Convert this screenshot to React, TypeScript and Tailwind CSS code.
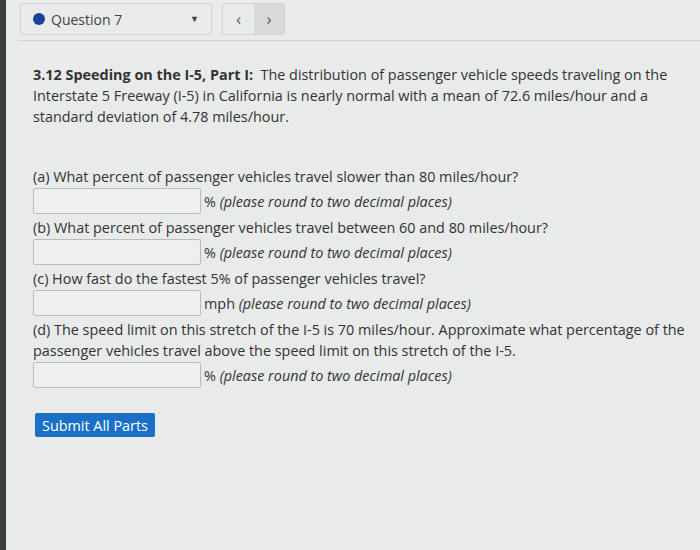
import React from 'react';

const Answer: React.FC<{ unit?: string }> = ({ unit = '%' }) => (
  <div className="flex items-center h-[26px] mt-[1px] mb-[3px]">
    <div className="w-[168px] h-[26px] border border-[#b8bdbb] rounded-[2px] bg-[#eef0ef]" />
    <span className="ml-[3px]">
      {unit} <i>(please round to two decimal places)</i>
    </span>
  </div>
);

export default function App() {
  return (
    <div
      className="w-[700px] h-[550px] flex bg-[#e8ebea] text-[#333] overflow-hidden"
      style={{ fontFamily: '"Open Sans", "Liberation Sans", sans-serif' }}
    >
      <div className="w-[6px] bg-[#3a3d3d]" />
      <div className="flex-1 flex flex-col">
        <div className="flex items-center ml-[12px] pl-[2px] pt-[3px] pb-[5px] border-b border-[#cfd3d1]">
          <div className="w-[192px] h-[32px] border border-[#d0d4d2] rounded-[3px] flex items-center px-[12px]">
            <span className="w-[12px] h-[12px] rounded-full bg-[#1d3f9a] mr-[6px]" />
            <span className="text-[14px] text-[#444]">Question 7</span>
            <span className="ml-auto text-[9px] text-[#444]">▼</span>
          </div>
          <div className="ml-[10px] w-[63px] h-[32px] border border-[#d0d4d2] rounded-[3px] flex overflow-hidden">
            <div className="w-[31px] flex items-center justify-center text-[17px] text-[#555]">&lsaquo;</div>
            <div className="flex-1 bg-[#d7dad9] flex items-center justify-center text-[17px] text-[#555]">&rsaquo;</div>
          </div>
        </div>

        <div className="pl-[27px] pr-[6px] pt-[23px] text-[14.4px] leading-[21px]">
          <p>
            <b>3.12 Speeding on the I-5, Part I:</b>&nbsp; The distribution of passenger vehicle speeds traveling on the
            Interstate 5 Freeway (I-5) in California is nearly normal with a mean of 72.6 miles/hour and a standard
            deviation of 4.78 miles/hour.
          </p>

          <div className="mt-[39px]">
            <p>(a) What percent of passenger vehicles travel slower than 80 miles/hour?</p>
            <Answer />
            <p>(b) What percent of passenger vehicles travel between 60 and 80 miles/hour?</p>
            <Answer />
            <p>(c) How fast do the fastest 5% of passenger vehicles travel?</p>
            <Answer unit="mph" />
            <p>
              (d) The speed limit on this stretch of the I-5 is 70 miles/hour. Approximate what percentage of the
              passenger vehicles travel above the speed limit on this stretch of the I-5.
            </p>
            <Answer />
          </div>

          <button className="mt-[22px] ml-[2px] bg-[#1a6fc7] text-white text-[14.4px] px-[7px] h-[24px] rounded-[2px]">
            Submit All Parts
          </button>
        </div>
      </div>
    </div>
  );
}
